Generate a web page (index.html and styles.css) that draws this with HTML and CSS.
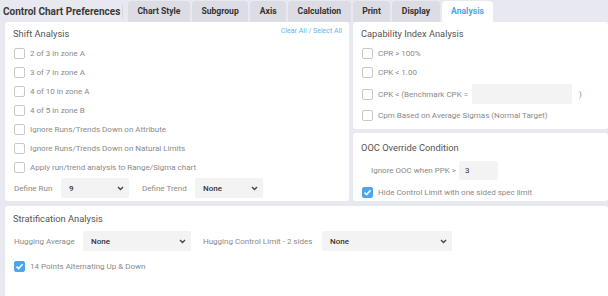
FILE: index.html
```html
<!DOCTYPE html>
<html lang="en">
<head>
    <meta charset="UTF-8">
    <meta name="viewport" content="width=device-width, initial-scale=1.0">
    <title>Control Chart Preferences</title>
    <link rel="stylesheet" href="styles.css">
</head>
<body>

    <!-- Tab bar -->
    <div class="tabbar">
        <div class="page-title">Control Chart Preferences</div>
        <div class="sep"></div>
        <div class="tab">Chart Style</div>
        <div class="tab">Subgroup</div>
        <div class="tab">Axis</div>
        <div class="tab">Calculation</div>
        <div class="tab">Print</div>
        <div class="tab">Display</div>
        <div class="tab active">Analysis</div>
    </div>

    <div class="content">
        <div class="top-grid">

            <!-- Shift Analysis -->
            <section class="panel shift">
                <div class="panel-head">
                    <h3>Shift Analysis</h3>
                    <a class="select-all">Clear All / Select All</a>
                </div>
                <div class="rows">
                    <label class="check-row"><span class="box"></span>2 of 3 in zone A</label>
                    <label class="check-row"><span class="box"></span>3 of 7 in zone A</label>
                    <label class="check-row"><span class="box"></span>4 of 10 in zone A</label>
                    <label class="check-row"><span class="box"></span>4 of 5 in zone B</label>
                    <label class="check-row"><span class="box"></span>Ignore Runs/Trends Down on Attribute</label>
                    <label class="check-row"><span class="box"></span>Ignore Runs/Trends Down on Natural Limits</label>
                    <label class="check-row"><span class="box"></span>Apply run/trend analysis to Range/Sigma chart</label>
                </div>
                <div class="field-row define-row">
                    <span class="field-label run-label">Define Run</span>
                    <div class="select run">
                        <span>9</span>
                        <svg width="7" height="5" viewBox="0 0 7 5"><path d="M1 1 L3.5 3.5 L6 1" fill="none" stroke="#444" stroke-width="1.4"/></svg>
                    </div>
                    <span class="field-label trend-label">Define Trend</span>
                    <div class="select trend">
                        <span>None</span>
                        <svg width="7" height="5" viewBox="0 0 7 5"><path d="M1 1 L3.5 3.5 L6 1" fill="none" stroke="#444" stroke-width="1.4"/></svg>
                    </div>
                </div>
            </section>

            <div class="right-col">
                <!-- Capability Index Analysis -->
                <section class="panel capability">
                    <h3>Capability Index Analysis</h3>
                    <div class="rows">
                        <label class="check-row"><span class="box"></span>CPR &gt; 100%</label>
                        <label class="check-row"><span class="box"></span>CPK &lt; 1.00</label>
                        <label class="check-row bench-row"><span class="box"></span>CPK &lt; (Benchmark CPK =
                            <span class="text-input bench"></span><span class="paren">)</span></label>
                        <label class="check-row"><span class="box"></span>Cpm Based on Average Sigmas (Normal Target)</label>
                    </div>
                </section>

                <!-- OOC Override -->
                <section class="panel ooc">
                    <h3>OOC Override Condition</h3>
                    <div class="ppk-row">
                        <span class="field-label">Ignore OOC when PPK &gt;</span>
                        <span class="text-input ppk">3</span>
                    </div>
                    <label class="check-row short">
                        <span class="box checked"><svg width="9" height="9" viewBox="0 0 9 9"><path d="M1.5 4.6 L3.6 6.6 L7.6 2.2" fill="none" stroke="#fff" stroke-width="1.5"/></svg></span>
                        Hide Control Limit with one sided spec limit
                    </label>
                </section>
            </div>
        </div>

        <!-- Stratification -->
        <section class="panel strat">
            <h3>Stratification Analysis</h3>
            <div class="field-row hug-row">
                <span class="field-label avg-label">Hugging Average</span>
                <div class="select hug-avg">
                    <span>None</span>
                    <svg width="7" height="5" viewBox="0 0 7 5"><path d="M1 1 L3.5 3.5 L6 1" fill="none" stroke="#444" stroke-width="1.4"/></svg>
                </div>
                <span class="field-label hug-label">Hugging Control Limit - 2 sides</span>
                <div class="select hug-limit">
                    <span>None</span>
                    <svg width="7" height="5" viewBox="0 0 7 5"><path d="M1 1 L3.5 3.5 L6 1" fill="none" stroke="#444" stroke-width="1.4"/></svg>
                </div>
            </div>
            <label class="check-row short alt-row">
                <span class="box checked"><svg width="9" height="9" viewBox="0 0 9 9"><path d="M1.5 4.6 L3.6 6.6 L7.6 2.2" fill="none" stroke="#fff" stroke-width="1.5"/></svg></span>
                14 Points Alternating Up &amp; Down
            </label>
        </section>
    </div>

</body>
</html>
```

FILE: styles.css
```css
/* Preferences page */
body {
    font-family: Roboto, "Liberation Sans", sans-serif;
    background-color: #e8e8f0;
    color: #555;
    margin: 0;
    overflow: hidden;
}

/* Tabs */
.tabbar {
    height: 22px;
    display: flex;
    align-items: flex-end;
}

.page-title {
    align-self: center;
    width: 122px;
    padding-left: 3px;
    box-sizing: border-box;
    font-size: 10px;
    font-weight: 700;
    color: #3a3a3a;
    white-space: nowrap;
}

.sep {
    align-self: center;
    width: 1px;
    height: 13px;
    background: #d6d6de;
    margin-right: 5px;
}

.tab {
    height: 21px;
    line-height: 21px;
    padding: 0 9.5px;
    margin-right: 2px;
    border-radius: 4px 4px 0 0;
    background: #dcdce5;
    font-size: 8.6px;
    font-weight: 700;
    color: #333;
}

.tab.active {
    background: #fff;
    color: #4da6ec;
}

/* Panels */
.content {
    padding: 0 0 0 5px;
}

.top-grid {
    display: grid;
    grid-template-columns: 344px 1fr;
    column-gap: 4px;
}

.right-col {
    display: flex;
    flex-direction: column;
    gap: 4px;
}

.panel {
    background: #fff;
    border-radius: 3px;
    padding: 5px 7px 2px 8px;
}

.panel h3 {
    margin: 0;
    font-size: 9.3px;
    font-weight: 400;
    line-height: 14px;
    color: #555;
}

.panel-head {
    display: flex;
    justify-content: space-between;
    align-items: flex-start;
}

.select-all {
    font-size: 7px;
    line-height: 8px;
    color: #64b3f0;
    cursor: pointer;
}

.rows {
    margin-top: 3px;
}

.check-row {
    display: flex;
    align-items: center;
    height: 19px;
    padding-left: 1px;
    font-size: 8px;
    color: #8a8a8a;
    white-space: nowrap;
}

.check-row.short {
    height: 14px;
}

.box {
    width: 11px;
    height: 11px;
    box-sizing: border-box;
    border: 1px solid #c8c8c8;
    border-radius: 2px;
    margin-right: 5px;
    flex: none;
    display: flex;
    align-items: center;
    justify-content: center;
}

.box.checked {
    background: #4da6ec;
    border-color: #4da6ec;
}

.field-label {
    font-size: 8px;
    color: #8a8a8a;
    white-space: nowrap;
}

.field-row {
    display: flex;
    align-items: center;
    height: 20px;
}

.select {
    height: 20px;
    box-sizing: border-box;
    background: #f3f3f4;
    border-radius: 2px;
    padding: 0 5px 0 8px;
    display: flex;
    align-items: center;
    justify-content: space-between;
    font-size: 8px;
    font-weight: 500;
    color: #333;
}

.text-input {
    display: inline-flex;
    align-items: center;
    height: 20px;
    box-sizing: border-box;
    background: #f3f3f4;
    border-radius: 2px;
    padding-left: 6px;
    font-size: 8px;
    color: #333;
}

/* Shift Analysis */
.define-row {
    margin-top: 1px;
    padding-left: 1px;
}

.run-label {
    width: 47px;
}

.define-row .select {
    width: 68px;
}

.trend-label {
    width: 53px;
    margin-left: 13px;
}

/* Capability */
.capability {
    padding-bottom: 4px;
}

.bench-row {
    height: 24px;
}

.text-input.bench {
    width: 100px;
    margin-left: 4px;
}

.paren {
    margin-left: 7px;
}

/* OOC */
.ooc {
    padding-top: 8px;
}

.ppk-row {
    display: flex;
    align-items: center;
    margin-top: 6px;
    padding-left: 10px;
}

.text-input.ppk {
    width: 39px;
    height: 19px;
    margin-left: 3px;
}

.ooc .check-row {
    margin-top: 5px;
}

/* Stratification */
.strat {
    margin-top: 5px;
    padding-top: 6px;
    height: 100px;
}

.hug-row {
    margin-top: 5px;
    padding-left: 1px;
}

.avg-label {
    width: 69px;
}

.hug-avg {
    width: 108px;
}

.hug-label {
    width: 119px;
    margin-left: 12px;
}

.hug-limit {
    width: 130px;
}

.alt-row {
    margin-top: 8px;
}
```
